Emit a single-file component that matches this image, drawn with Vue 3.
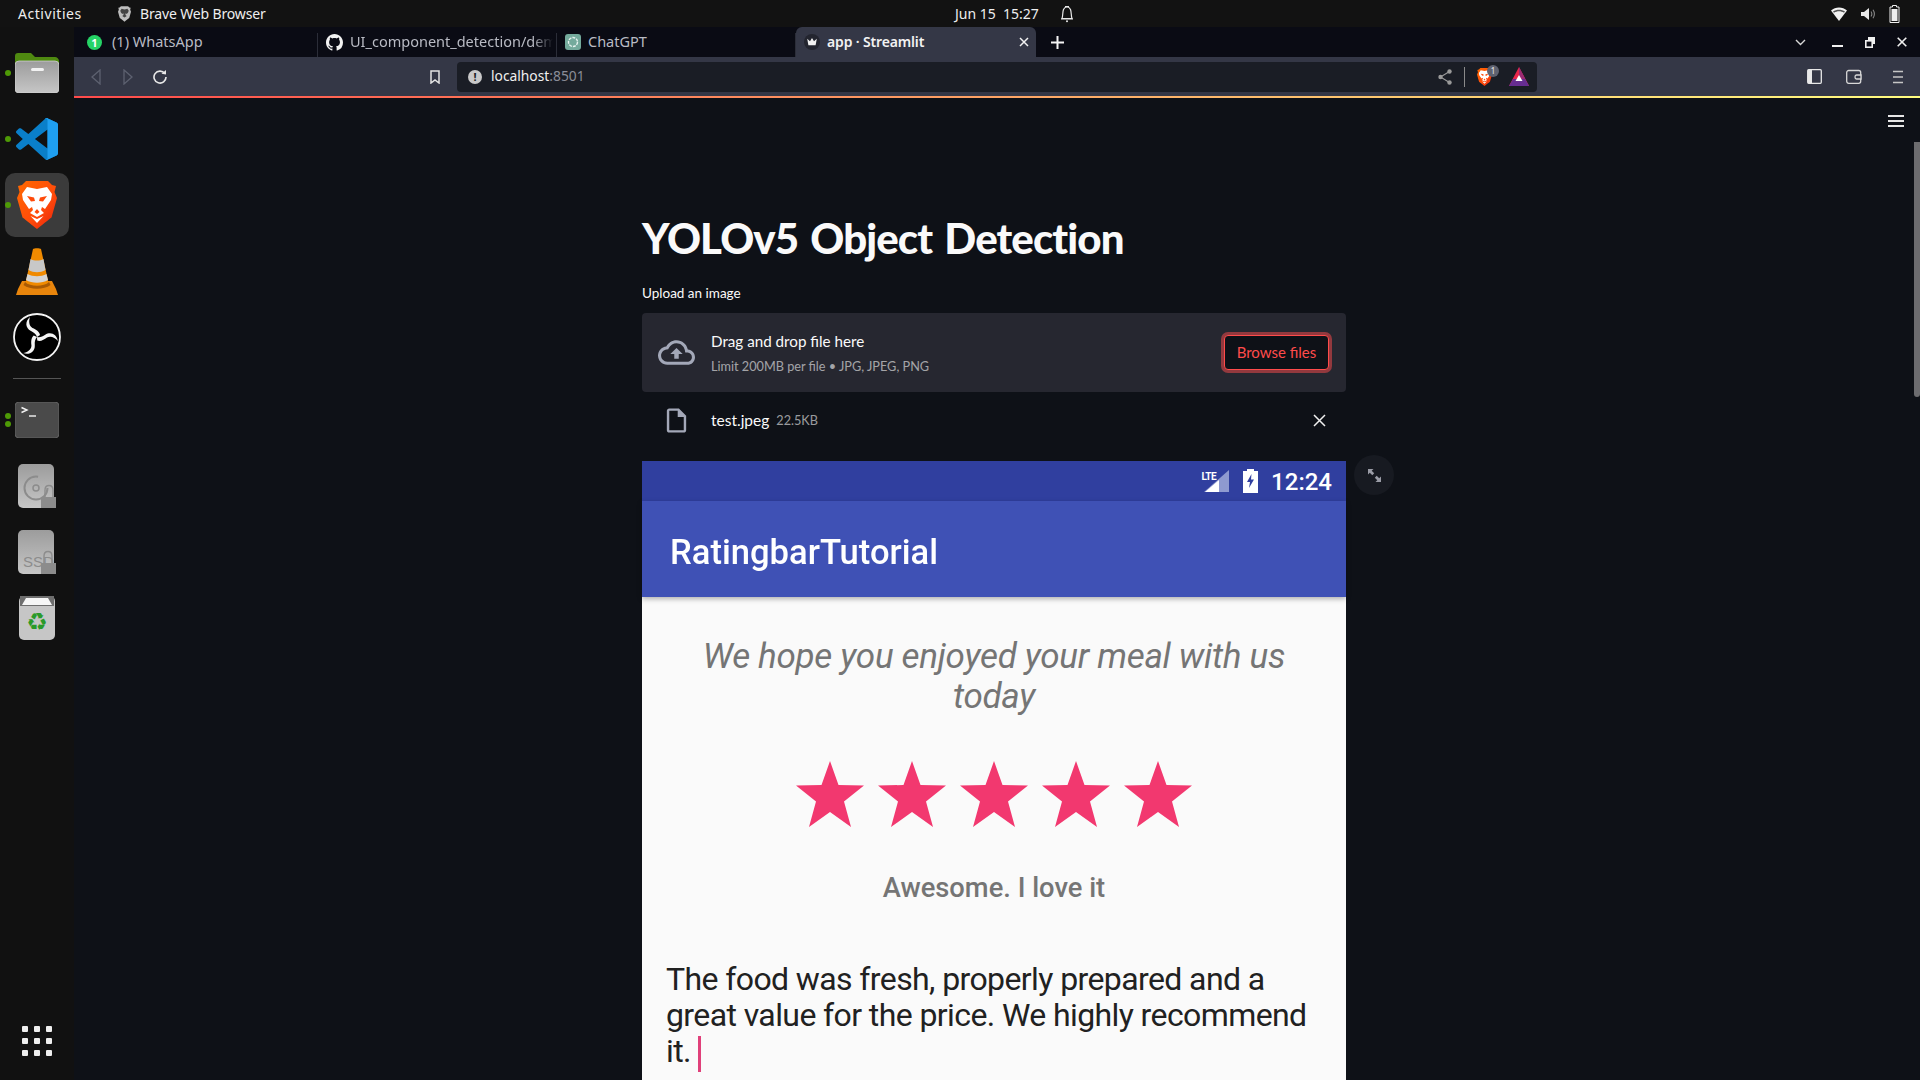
<script setup>
const dockApps = [
  { id: "files", dots: 1 },
  { id: "vscode", dots: 1 },
  { id: "brave", dots: 1, active: true },
  { id: "vlc", dots: 0 },
  { id: "obs", dots: 0 },
];
const dockMounts = ["terminal", "disk", "ssd", "trash"];
const obsArms = [0, 120, 240];
const stars = [1, 2, 3, 4, 5];
const gridDots = 9;
</script>

<template>
  <div class="desktop">
    <svg class="defs" width="0" height="0">
      <defs>
        <linearGradient id="braveFill" x1="0" y1="0" x2="1" y2="1">
          <stop offset="0" stop-color="#ff6a00" />
          <stop offset="0.6" stop-color="#ff4a0a" />
          <stop offset="1" stop-color="#e8200c" />
        </linearGradient>
        <linearGradient id="greyFill" x1="0" y1="0" x2="0" y2="1">
          <stop offset="0" stop-color="#9c9c9c" />
          <stop offset="1" stop-color="#c6c6c6" />
        </linearGradient>
        <symbol id="braveShield" viewBox="0 0 40 48">
          <path d="M9 0H31L35 4 39 5 37.500 11 40 17 34.500 36.500C31 39 24 45 20 48 16 45 9 39 5.500 36.500L0 17 2.500 11 1 5 5 4Z" fill="url(#braveFill)" />
          <path d="M5 13 10 6 20 8 30 6 35 13 34 19 28 28 25 26 24 29 27 32 20 36 13 32 16 29 15 26 12 28 6 19Z" fill="#fff" />
          <path d="M13.500 35 20 38 26.500 35 20 42Z" fill="#fff" />
          <path d="M10 15 17 16.500 18 20 14 20.500ZM30 15 23 16.500 22 20 26 20.500Z" fill="#ff4a0a" />
          <path d="M20 28 17.500 31 20 33 22.500 31Z" fill="#ff4a0a" />
        </symbol>
      </defs>
    </svg>

    <header class="topbar">
      <div class="top-left">
        <span class="activities">Activities</span>
        <svg class="top-shield" width="13" height="16" viewBox="0 0 40 48">
          <path d="M9 0H31L35 4 39 5 37.500 11 40 17 34.500 36.500C31 39 24 45 20 48 16 45 9 39 5.500 36.500L0 17 2.500 11 1 5 5 4Z" fill="#bdbdbd" />
          <path d="M7 14 11 8 20 10 29 8 33 14 31 19 27 24 23.500 22 23 27 27 30 20 35 13 30 17 27 16.500 22 13 24 9 19Z" fill="#444" />
        </svg>
        <span class="top-app">Brave Web Browser</span>
      </div>
      <div class="top-clock">
        <span class="clock-text">Jun 15&nbsp; 15:27</span>
        <svg width="14" height="18" viewBox="0 0 14 18" fill="none" stroke="#e8e8e8" stroke-width="1.200">
          <path d="M2 13.500C3 11 2.500 7 3.500 4.500 4.200 2.800 5.500 2 7 2S9.800 2.800 10.500 4.500C11.500 7 11 11 12 13.500Z" />
          <path d="M1 14H13M5 1.500H9" />
          <circle cx="7" cy="16.200" r="1" fill="#e8e8e8" stroke="none" />
        </svg>
      </div>
      <div class="top-right">
        <svg width="16" height="14" viewBox="0 0 16 14"><path d="M0 3.500C4.500 -.500 11.500 -.500 16 3.500L8 14Z" fill="#f2f2f2" /><path d="M2 4.500C5.500 2 10.500 2 14 4.500L13 5.800C10 3.800 6 3.800 3 5.800Z" fill="#555" /></svg>
        <svg width="14" height="14" viewBox="0 0 14 14"><path d="M0 5H3L8 1V13L3 9H0Z" fill="#e8e8e8" /><path d="M10 4.500C11 6 11 8 10 9.500M12 2.800C13.600 5.200 13.600 8.800 12 11.200" fill="none" stroke="#888" stroke-width="1.100" /></svg>
        <svg width="11" height="18" viewBox="0 0 11 18"><path d="M3.500 .500H7.500V2H10V17.500H1V2H3.500Z" fill="none" stroke="#eee" stroke-width="1" /><rect x="2.500" y="4" width="6" height="12" fill="#eee" /></svg>
      </div>
    </header>

    <div class="workspace">
      <nav class="dock">
        <div v-for="app in dockApps" :key="app.id" class="dock-item" :class="{ active: app.active }">
          <i v-if="app.dots" class="run-dot"></i>

          <svg v-if="app.id === 'files'" width="44" height="40" viewBox="0 0 44 40">
            <path d="M3 0H16L20 4H40C42 4 44 6 44 8V18H0V3C0 1 1 0 3 0Z" fill="#4f8a10" />
            <rect y="8" width="44" height="32" rx="4" fill="url(#greyFill)" stroke="#d8d8d8" stroke-width=".7" />
            <rect x="16" y="15" width="13" height="3" rx="1.500" fill="#f2f2f2" />
          </svg>

          <svg v-else-if="app.id === 'vscode'" width="42" height="42" viewBox="0 0 100 100">
            <path fill="#0a7fc9" fill-rule="evenodd" d="M70.900 99.300C72.500 99.900 74.300 99.900 75.900 99.100L96.500 89.200C98.600 88.200 100 86 100 83.600V16.400C100 14 98.600 11.800 96.500 10.800L75.900.9C73.800-.1 71.300.1 69.500 1.400 69.300 1.600 69 1.800 68.800 2.100L29.400 38 12.200 25C10.600 23.800 8.400 23.900 6.900 25.200L1.400 30.300C-.5 31.900-.5 34.800 1.400 36.400L16.200 50 1.400 63.600C-.5 65.200-.5 68.100 1.400 69.700L6.900 74.800C8.400 76.100 10.600 76.200 12.200 75L29.400 62 68.800 97.900C69.400 98.500 70.100 99 70.900 99.300ZM75 27.300 45.100 50 75 72.700Z" />
            <path fill="#1f9ff0" d="M70.900 99.300C72.500 99.900 74.300 99.900 75.900 99.100L96.500 89.200C98.600 88.200 100 86 100 83.600V16.400C100 14 98.600 11.800 96.500 10.800L75.900.9C73.800-.1 71.300.1 69.500 1.400 72 .5 75 2.200 75 5V95C75 97.800 73 99.500 70.900 99.300Z" />
          </svg>

          <svg v-else-if="app.id === 'brave'" width="40" height="48"><use href="#braveShield" /></svg>

          <svg v-else-if="app.id === 'vlc'" width="42" height="47" viewBox="0 0 42 47">
            <path d="M6 33 2 41 0 47H42L40 41 36 33Z" fill="#e8850c" />
            <path d="M17 1C18 0 24 0 25 1L33 37C28 41 14 41 9 37Z" fill="#f08a00" />
            <path d="M14.500 11C18 13 24 13 27.500 11L29.500 22C24 25 18 25 12.500 22Z" fill="#c8c8c8" />
            <path d="M9 34C14 39 28 39 33 34L34.500 37C28 42 14 42 7.500 37Z" fill="#a85a04" />
            <path d="M11.500 26C17 29 25 29 30.500 26L32 32C26 35.500 16 35.500 10 32Z" fill="#d4d4d4" />
          </svg>

          <svg v-else-if="app.id === 'obs'" width="48" height="48" viewBox="0 0 48 48">
            <circle cx="24" cy="24" r="23" fill="#000" stroke="#f4f4f4" stroke-width="1.800" />
            <path v-for="a in obsArms" :key="a" :transform="`rotate(${a} 24 24)`" fill="#f4f4f4"
              d="M17 4C12 8 12 15 18 18 21 19.500 23 21 24 24L27 22C26.500 18.500 23 16.500 19.500 15 16 13 15.500 8 17 4Z" />
          </svg>
        </div>

        <div class="dock-sep"></div>

        <div v-for="item in dockMounts" :key="item" class="dock-item">
          <template v-if="item === 'terminal'">
            <i class="run-dot two-a"></i><i class="run-dot two-b"></i>
            <svg width="44" height="36" viewBox="0 0 44 36">
              <rect width="44" height="36" rx="4" fill="#4a4a4a" stroke="#6a6a6a" stroke-width=".8" />
              <path d="M6.500 5.500 12 8 6.500 10.500" fill="none" stroke="#f4f4f4" stroke-width="1.400" />
              <path d="M14 14H21" stroke="#f4f4f4" stroke-width="1.400" />
            </svg>
          </template>

          <svg v-else-if="item === 'disk'" width="38" height="44" viewBox="0 0 38 44">
            <rect width="36" height="44" rx="5" fill="url(#greyFill)" />
            <circle cx="18" cy="24" r="11.500" fill="none" stroke="#8c8c8c" stroke-width="2" stroke-dasharray="56 16" />
            <circle cx="18" cy="24" r="3" fill="none" stroke="#8c8c8c" stroke-width="1.500" />
            <path d="M27 33V26C27 20 35 20 35 26V33" fill="none" stroke="#8c8c8c" stroke-width="1.400" />
            <rect x="23" y="33" width="15" height="11" fill="#8c8c8c" />
          </svg>

          <svg v-else-if="item === 'ssd'" width="38" height="44" viewBox="0 0 38 44">
            <rect width="36" height="44" rx="5" fill="url(#greyFill)" />
            <text x="5" y="37" class="ssd-label">SSD</text>
            <path d="M26 33V26C26 20 34 20 34 26V33" fill="none" stroke="#8c8c8c" stroke-width="1.400" />
            <rect x="23" y="33" width="15" height="11" fill="#8c8c8c" />
          </svg>

          <div v-else class="trash">
            <svg width="36" height="44" viewBox="0 0 36 44">
              <rect width="36" height="44" rx="5" fill="#c6c6c6" />
              <path d="M1 0H35V10H1Z" fill="#6e6e6e" />
              <path d="M7 2H29L33 9H3Z" fill="#f6f6f6" />
            </svg>
            <span class="recycle">♻</span>
          </div>
        </div>

        <div class="apps-grid">
          <i v-for="n in gridDots" :key="n"></i>
        </div>
      </nav>

      <section class="browser">
        <div class="tabstrip">
          <div class="tab first">
            <span class="wa-icon">1</span>
            <span class="tab-title">(1) WhatsApp</span>
          </div>
          <div class="tab">
            <svg width="17" height="17" viewBox="0 0 16 16" fill="#f2f2f2">
              <path d="M8 0C3.580 0 0 3.580 0 8c0 3.540 2.290 6.530 5.470 7.590.4.070.55-.17.55-.38 0-.19-.01-.82-.01-1.490-2.010.37-2.530-.49-2.690-.94-.09-.23-.48-.94-.82-1.130-.28-.15-.68-.52-.01-.53.63-.01 1.080.58 1.230.82.72 1.210 1.870.87 2.330.66.07-.52.28-.87.51-1.070-1.780-.2-3.640-.89-3.640-3.950 0-.87.31-1.590.82-2.150-.08-.2-.36-1.020.08-2.120 0 0 .67-.21 2.200.82.64-.18 1.320-.27 2-.27.68 0 1.360.09 2 .27 1.530-1.040 2.200-.82 2.200-.82.44 1.100.16 1.920.08 2.120.51.56.82 1.270.82 2.150 0 3.070-1.870 3.750-3.650 3.950.29.25.54.73.54 1.480 0 1.070-.01 1.930-.01 2.200 0 .21.15.46.55.38A8.013 8.013 0 0016 8c0-4.420-3.580-8-8-8z" />
            </svg>
            <span class="tab-title fade">UI_component_detection/demo</span>
          </div>
          <div class="tab">
            <svg width="16" height="16" viewBox="0 0 16 16">
              <rect width="16" height="16" rx="3" fill="#74aa9c" />
              <circle cx="8" cy="8" r="4.500" fill="none" stroke="#e6f2ef" stroke-width="1.400" stroke-dasharray="3 1" />
            </svg>
            <span class="tab-title">ChatGPT</span>
          </div>
          <div class="tab current">
            <span class="st-fav">
              <svg width="12" height="10" viewBox="0 0 12 10"><path d="M0 1 3.500 4 6 0 8.500 4 12 1 10.500 9H1.500Z" fill="#f2f2f2" /></svg>
            </span>
            <span class="tab-title strong">app · Streamlit</span>
            <svg class="tab-close" width="10" height="10" viewBox="0 0 10 10"><path d="M1 1 9 9M9 1 1 9" stroke="#f2f2f2" stroke-width="1.500" /></svg>
          </div>
          <svg class="new-tab" width="13" height="13" viewBox="0 0 13 13"><path d="M6.500 0V13M0 6.500H13" stroke="#f5f5f5" stroke-width="2" /></svg>
          <div class="win-controls">
            <svg class="win-chevron" width="11" height="7" viewBox="0 0 11 7"><path d="M1 1 5.500 5.500 10 1" fill="none" stroke="#d8d8d8" stroke-width="1.400" /></svg>
            <svg class="win-min" width="11" height="2" viewBox="0 0 11 2"><rect width="11" height="2" fill="#f0f0f0" /></svg>
            <svg width="10" height="11" viewBox="0 0 10 11"><path d="M3 0H10V7H8V3H3Z" fill="#f0f0f0" /><rect x=".8" y="3.800" width="6.400" height="6.400" fill="none" stroke="#f0f0f0" stroke-width="1.600" /></svg>
            <svg width="10" height="10" viewBox="0 0 10 10"><path d="M.7.7 9.300 9.300M9.300.7.7 9.300" stroke="#f0f0f0" stroke-width="1.600" /></svg>
          </div>
        </div>

        <div class="toolbar">
          <div class="nav-btns">
            <button class="tool"><svg width="10" height="16" viewBox="0 0 10 16"><path d="M9 1 1 8 9 15Z" fill="none" stroke="#5d6170" stroke-width="1.300" /></svg></button>
            <button class="tool"><svg width="10" height="16" viewBox="0 0 10 16"><path d="M1 1 9 8 1 15Z" fill="none" stroke="#5d6170" stroke-width="1.300" /></svg></button>
            <button class="tool"><svg width="14" height="15" viewBox="0 0 14 15"><path d="M11.800 4.500A6 6 0 1 0 13 8" fill="none" stroke="#e8e8e8" stroke-width="1.600" /><path d="M8.500 4.800 13 5.500 13 1Z" fill="#e8e8e8" /></svg></button>
          </div>
          <button class="tool"><svg width="10" height="14" viewBox="0 0 10 14"><path d="M1 1H9V13L5 10 1 13Z" fill="none" stroke="#e4e4e4" stroke-width="1.500" /></svg></button>
          <div class="urlbar">
            <span class="info-icon">!</span>
            <span class="url"><span class="host">localhost</span>:8501</span>
            <div class="url-tools">
              <svg width="14" height="16" viewBox="0 0 14 16"><g fill="#9a9a9a"><circle cx="11.500" cy="2.500" r="2.200" /><circle cx="2.500" cy="8" r="2.200" /><circle cx="11.500" cy="13.500" r="2.200" /></g><path d="M11.500 2.500 2.500 8 11.500 13.500" fill="none" stroke="#9a9a9a" stroke-width="1.100" /></svg>
              <i class="url-sep"></i>
              <span class="shield-wrap">
                <svg class="shield-small" width="15" height="18"><use href="#braveShield" /></svg>
                <b class="shield-count">1</b>
              </span>
              <svg width="20" height="19" viewBox="0 0 20 19">
                <path d="M10 0 20 19H0Z" fill="#e8264a" />
                <path d="M10 0 20 19 H14 L10 12Z" fill="#9a2a74" />
                <path d="M0 19 4 12H16L20 19Z" fill="#662d91" />
                <path d="M10 8 13.500 14H6.500Z" fill="#fff" />
              </svg>
            </div>
          </div>
          <div class="side-tools">
            <button class="tool"><svg width="15" height="15" viewBox="0 0 15 15"><rect x=".7" y=".7" width="13.600" height="13.600" rx="1" fill="none" stroke="#e8e8e8" stroke-width="1.300" /><rect x="1" y="1" width="4" height="13" fill="#e8e8e8" /></svg></button>
            <button class="tool"><svg width="16" height="15" viewBox="0 0 16 15"><rect x=".7" y="1.500" width="14" height="12.800" rx="2" fill="none" stroke="#d8d8d8" stroke-width="1.300" /><path d="M15 6H10.500C8.500 6 8.500 10 10.500 10H15Z" fill="#343746" stroke="#d8d8d8" stroke-width="1.300" /></svg></button>
            <button class="tool last"><svg width="10" height="14" viewBox="0 0 10 14"><path d="M0 1.500H10M0 7H10M0 12.500H10" stroke="#c6c6c6" stroke-width="1.700" /></svg></button>
          </div>
        </div>
        <div class="decoration"></div>

        <main class="st-main">
          <button class="st-menu"><svg width="16" height="12" viewBox="0 0 16 12"><path d="M0 1H16M0 6H16M0 11H16" stroke="#e6e6e6" stroke-width="1.800" /></svg></button>
          <div class="scroll-thumb"></div>

          <div class="block">
            <h1>YOLOv5 Object Detection</h1>
            <label class="up-label">Upload an image</label>

            <div class="dropzone">
              <svg class="cloud" width="37" height="37" viewBox="0 0 24 24" fill="#a3a8b8">
                <path d="M19.350 10.040C18.670 6.590 15.640 4 12 4 9.110 4 6.600 5.640 5.350 8.040 2.340 8.360 0 10.910 0 14c0 3.310 2.690 6 6 6h13c2.760 0 5-2.240 5-5 0-2.640-2.050-4.780-4.650-4.960zM19 18H6c-2.210 0-4-1.790-4-4 0-2.050 1.530-3.760 3.560-3.970l1.070-.11.5-.95C8.080 7.140 9.940 6 12 6c2.620 0 4.880 1.860 5.390 4.430l.3 1.500 1.530.11c1.560.1 2.780 1.410 2.780 2.960 0 1.650-1.350 3-3 3zM8 13h2.550v3h2.900v-3H16l-4-4z" />
              </svg>
              <div class="drop-text">
                <span class="drop-main">Drag and drop file here</span>
                <small>Limit 200MB per file • JPG, JPEG, PNG</small>
              </div>
              <button class="browse">Browse files</button>
            </div>

            <div class="file-row">
              <svg width="29" height="29" viewBox="0 0 24 24" fill="#a3a8b8">
                <path d="M14 2H6c-1.100 0-1.990.9-1.990 2L4 20c0 1.100.89 2 1.990 2H18c1.100 0 2-.9 2-2V8l-6-6zM6 20V4h7v5h5v11H6z" />
              </svg>
              <span class="file-name">test.jpeg</span>
              <small class="file-size">22.5KB</small>
              <svg class="file-x" width="13" height="13" viewBox="0 0 13 13"><path d="M1 1 12 12M12 1 1 12" stroke="#f0f0f0" stroke-width="1.500" /></svg>
            </div>

            <div class="image-wrap">
              <button class="expand">
                <svg width="15" height="15" viewBox="0 0 15 15" fill="#9a9ca6">
                  <path d="M1 1H6.500L4.700 2.800 7.200 5.300 5.300 7.200 2.800 4.700 1 6.500Z" />
                  <path d="M14 14H8.500L10.300 12.200 7.800 9.700 9.700 7.800 12.200 10.300 14 8.500Z" />
                </svg>
              </button>

              <div class="phone">
                <div class="phone-status">
                  <span class="lte">LTE</span>
                  <svg class="signal" width="25" height="22" viewBox="0 0 25 22">
                    <path d="M25 0V22H0Z" fill="#8f9ad0" />
                    <path d="M15 10V22H1Z" fill="#fff" />
                  </svg>
                  <svg class="batt" width="15" height="24" viewBox="0 0 15 24">
                    <path d="M4 0H11V2H15V24H0V2H4Z" fill="#fff" />
                    <path d="M8.500 5 4 13H7L6 19 11 10.500H8Z" fill="#303f9f" />
                  </svg>
                  <span class="phone-time">12:24</span>
                </div>
                <div class="phone-appbar">RatingbarTutorial</div>
                <div class="phone-body">
                  <p class="prompt">We hope you enjoyed your meal with us<br />today</p>
                  <div class="stars">
                    <svg v-for="s in stars" :key="s" width="68" height="66" viewBox="0 0 68 66">
                      <path d="M34 0 42.500 24 68 24.500 48 40.500 55 66 34 51 13 66 20 40.500 0 24.500 25.500 24Z" fill="#f2386f" />
                    </svg>
                  </div>
                  <p class="verdict">Awesome. I love it</p>
                  <p class="review">The food was fresh, properly prepared and a great value for the price. We highly recommend it. <i class="caret"></i></p>
                </div>
              </div>
            </div>
          </div>
        </main>
      </section>
    </div>
  </div>
</template>

<style>
html,
body {
  margin: 0;
  background: #0e1117;
  overflow: hidden;
}
</style>

<style scoped>
.defs {
  position: absolute;
}

.desktop {
  width: 1920px;
  height: 1080px;
  overflow: hidden;
  display: flex;
  flex-direction: column;
  font-family: "Noto Sans", sans-serif;
  color: #eee;
}

button {
  background: none;
  border: none;
  padding: 0;
  font: inherit;
}

/* top bar */
.topbar {
  height: 27px;
  flex: none;
  background: #121212;
  display: grid;
  grid-template-columns: 955px auto 1fr;
  align-items: center;
  font-size: 14px;
}

.top-left {
  display: flex;
  align-items: center;
  padding-left: 18px;
}

.activities {
  width: 100px;
  letter-spacing: 0.55px;
}

.top-shield {
  margin-right: 9px;
}

.top-app {
  letter-spacing: -0.15px;
}

.top-clock {
  display: flex;
  align-items: center;
  gap: 21px;
}

.top-right {
  display: flex;
  align-items: center;
  justify-content: flex-end;
  gap: 14px;
  padding-right: 20px;
}

/* dock */
.workspace {
  flex: 1;
  display: flex;
  min-height: 0;
}

.dock {
  width: 74px;
  flex: none;
  background: #111;
  display: flex;
  flex-direction: column;
  align-items: center;
  gap: 2px;
  padding-top: 14px;
  box-sizing: border-box;
}

.dock-item {
  position: relative;
  width: 64px;
  height: 64px;
  display: flex;
  align-items: center;
  justify-content: center;
  border-radius: 10px;
}

.dock-item.active {
  background: #3b3b3b;
}

.run-dot {
  position: absolute;
  left: 0;
  top: 29px;
  width: 6px;
  height: 6px;
  border-radius: 50%;
  background: #4e9a06;
}

.run-dot.two-a {
  top: 25px;
}

.run-dot.two-b {
  top: 33px;
}

.dock-sep {
  width: 48px;
  height: 1px;
  background: #555;
  margin: 7px 0;
}

.ssd-label {
  font-family: "Liberation Sans", sans-serif;
  font-size: 15px;
  fill: #8c8c8c;
}

.trash {
  position: relative;
  width: 36px;
  height: 44px;
}

.recycle {
  position: absolute;
  left: 0;
  right: 0;
  top: 13px;
  text-align: center;
  font-family: "DejaVu Sans", sans-serif;
  font-size: 24px;
  line-height: 26px;
  color: #2a9a2a;
}

.apps-grid {
  margin-top: auto;
  margin-bottom: 24px;
  display: grid;
  grid-template-columns: repeat(3, 6px);
  gap: 6px;
}

.apps-grid i {
  width: 6px;
  height: 6px;
  border-radius: 1px;
  background: #eee;
}

/* browser chrome */
.browser {
  flex: 1;
  min-width: 0;
  display: flex;
  flex-direction: column;
}

.tabstrip {
  height: 30px;
  flex: none;
  background: #0a0b14;
  display: flex;
  font-size: 14.500px;
  color: #b9bbc4;
  position: relative;
}

.tab {
  width: 239px;
  box-sizing: border-box;
  display: flex;
  align-items: center;
  gap: 7px;
  padding-left: 8px;
  position: relative;
}

.tab-title {
  position: relative;
  top: -1px;
  white-space: nowrap;
}

.tab::after {
  content: "";
  position: absolute;
  right: 0;
  top: 6px;
  bottom: 0;
  width: 1px;
  background: #2b2d38;
}

.tab.first {
  margin-left: 5px;
  gap: 10px;
}

.tab.current {
  width: 240px;
  background: #343746;
  border-radius: 6px 6px 0 0;
}

.tab.current::after {
  display: none;
}

.wa-icon {
  width: 15px;
  height: 15px;
  border-radius: 50%;
  background: #25d366;
  color: #fff;
  font-size: 11px;
  font-weight: 700;
  line-height: 15px;
  text-align: center;
}

.tab-title.fade {
  width: 203px;
  overflow: hidden;
  -webkit-mask-image: linear-gradient(90deg, #000 90%, transparent);
  mask-image: linear-gradient(90deg, #000 90%, transparent);
}

.tab-title.strong {
  color: #f2f2f2;
  font-weight: 600;
  font-size: 14px;
  letter-spacing: -0.15px;
}

.st-fav {
  width: 16px;
  height: 16px;
  border-radius: 50%;
  background: #23252f;
  display: flex;
  align-items: center;
  justify-content: center;
  flex: none;
}

.st-fav svg {
  width: 10px;
  height: 8px;
}

.tab-close {
  position: absolute;
  left: 223px;
  top: 10px;
}

.new-tab {
  margin: 9px 0 0 15px;
}

.win-controls {
  position: absolute;
  top: 0;
  bottom: 0;
  left: 1720.500px;
  display: flex;
  align-items: center;
  gap: 22px;
}

.win-chevron {
  margin-right: 4px;
}

.win-min {
  margin-top: 8px;
}

.toolbar {
  height: 39px;
  flex: none;
  background: #343746;
  display: grid;
  grid-template-columns: 345px 38px 1080px 1fr;
  align-items: center;
}

.nav-btns {
  display: flex;
  padding-left: 6px;
}

.tool {
  width: 32px;
  height: 32px;
  display: flex;
  align-items: center;
  justify-content: center;
}

.toolbar > .tool {
  justify-self: start;
}

.urlbar {
  height: 30px;
  background: #1a1d25;
  border-radius: 4px;
  display: flex;
  align-items: center;
  padding: 0 8px 0 10px;
  font-size: 13.800px;
  color: #8a8d98;
}

.url {
  position: relative;
  top: -1px;
}

.info-icon {
  width: 14px;
  height: 14px;
  margin: 0 9px 0 1px;
  border-radius: 50%;
  background: #c9c9c9;
  color: #1a1d25;
  font-size: 11px;
  font-weight: 700;
  line-height: 14px;
  text-align: center;
}

.host {
  color: #f0f0f0;
}

.url-tools {
  margin-left: auto;
  display: flex;
  align-items: center;
}

.url-sep {
  width: 1px;
  height: 20px;
  background: #8a8a8a;
  margin: 0 9px 0 12px;
}

.shield-wrap {
  position: relative;
  width: 20px;
  height: 22px;
  margin-right: 15px;
  display: flex;
  align-items: center;
}

.shield-small {
  margin-left: 3px;
}

.shield-count {
  position: absolute;
  right: -5px;
  top: -1px;
  width: 12px;
  height: 12px;
  border-radius: 50%;
  background: #5f6270;
  font-size: 8px;
  font-weight: 400;
  line-height: 12px;
  text-align: center;
  color: #eee;
}

.side-tools {
  display: flex;
  justify-content: flex-end;
  gap: 8px;
  padding-right: 6px;
}

.tool.last {
  margin-left: 4px;
}

.decoration {
  height: 2px;
  flex: none;
  background: linear-gradient(90deg, #ff4b4b, #fffd80);
}

/* streamlit page */
.st-main {
  position: relative;
  flex: 1;
  min-height: 0;
  overflow: hidden;
  background: #0e1117;
  font-family: Lato, sans-serif;
  color: #fafafa;
}

.st-menu {
  position: absolute;
  right: 16px;
  top: 17px;
  display: flex;
}

.scroll-thumb {
  position: absolute;
  right: 0;
  top: 44px;
  width: 6px;
  height: 255px;
  background: #6c6c6f;
  border-radius: 0 0 3px 3px;
}

.block {
  width: 704px;
  margin-left: 568px;
  padding-top: 112px;
}

h1 {
  margin: 0;
  font-size: 42px;
  font-weight: 900;
  letter-spacing: -0.9px;
  word-spacing: 3px;
  line-height: 56px;
  white-space: nowrap;
}

.up-label {
  display: block;
  margin-top: 17px;
  font-size: 13.500px;
  line-height: 20px;
}

.dropzone {
  margin-top: 10px;
  height: 79px;
  background: #262730;
  border-radius: 4px;
  display: flex;
  align-items: center;
  padding: 0 14px 0 16px;
  box-sizing: border-box;
}

.drop-text {
  margin-left: 16px;
  display: flex;
  flex-direction: column;
  gap: 5px;
}

.drop-main {
  font-size: 15.200px;
  line-height: 22px;
}

.drop-text small {
  font-size: 12.700px;
  line-height: 18px;
  color: rgba(250, 250, 250, 0.6);
}

.browse {
  margin-left: auto;
  margin-right: 3px;
  width: 105px;
  height: 35px;
  box-sizing: border-box;
  padding-bottom: 2px;
  background: #0e1117;
  border: 1px solid #ff4b4b;
  border-radius: 4px;
  box-shadow: 0 0 0 3px rgba(255, 75, 75, 0.5);
  color: #ff4b4b;
  font-family: Lato, sans-serif;
  font-size: 15px;
}

.file-row {
  height: 56px;
  display: flex;
  align-items: center;
  padding-left: 20px;
}

.file-name {
  margin-left: 20px;
  font-size: 15.500px;
}

.file-size {
  margin-left: 7px;
  font-size: 12.700px;
  color: rgba(250, 250, 250, 0.6);
}

.file-x {
  margin-left: auto;
  margin-right: 20px;
}

.image-wrap {
  position: relative;
  margin-top: 13px;
}

.expand {
  position: absolute;
  left: 712px;
  top: -6px;
  width: 40px;
  height: 40px;
  border-radius: 50%;
  background: #171a21;
  display: flex;
  align-items: center;
  justify-content: center;
}

/* the uploaded screenshot */
.phone {
  width: 704px;
  background: #fafafa;
  font-family: Roboto, sans-serif;
  filter: blur(0.5px);
}

.phone-status {
  height: 40px;
  background: #303f9f;
  display: flex;
  align-items: center;
  justify-content: flex-end;
  padding-right: 14px;
  color: #fff;
}

.lte {
  font-size: 10px;
  font-weight: 700;
  letter-spacing: -0.5px;
  margin: -10px -12px 0 0;
  position: relative;
}

.batt {
  margin: 0 13px 0 14px;
}

.phone-time {
  font-size: 24px;
  font-weight: 500;
  padding-top: 2px;
}

.phone-appbar {
  height: 96px;
  background: #3f51b5;
  color: #fff;
  font-size: 34.600px;
  font-weight: 500;
  line-height: 102px;
  padding-left: 28px;
  box-shadow: 0 2px 5px rgba(0, 0, 0, 0.3);
  position: relative;
}

.phone-body {
  padding: 40px 0 120px;
}

.prompt {
  margin: 0;
  text-align: center;
  font-size: 35px;
  font-weight: 400;
  font-style: italic;
  letter-spacing: -0.3px;
  line-height: 40px;
  color: #757575;
}

.stars {
  margin-top: 44px;
  display: flex;
  justify-content: center;
  gap: 14px;
}

.verdict {
  margin: 45px 0 0;
  text-align: center;
  font-size: 27.300px;
  font-weight: 500;
  line-height: 32px;
  color: #757575;
}

.review {
  margin: 57px 0 0;
  padding: 0 10px 0 24px;
  font-size: 32px;
  letter-spacing: -0.6px;
  line-height: 36px;
  color: #212121;
}

.caret {
  display: inline-block;
  width: 3px;
  height: 36px;
  background: #e0407a;
  vertical-align: middle;
}
</style>
